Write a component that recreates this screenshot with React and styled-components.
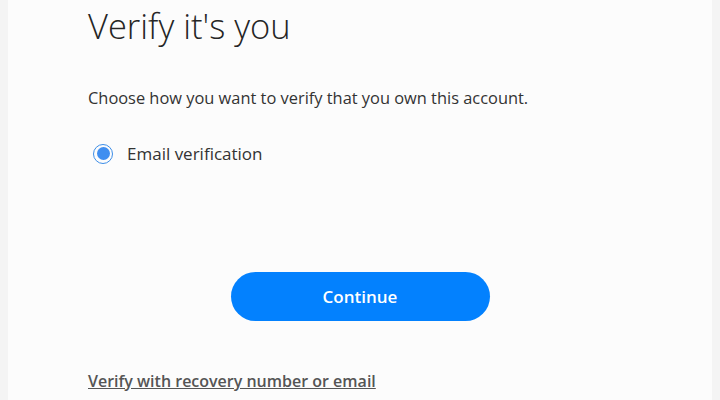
import styled, { createGlobalStyle } from "styled-components";

const GlobalStyle = createGlobalStyle`
    html, body {
        margin: 0;
        background: #f4f4f4;
        font-family: "Open Sans", "Noto Sans", sans-serif;
    }
`;

const Page = styled.div`
    padding: 0 8px;
    height: 400px;
    overflow: hidden;
`;

const Panel = styled.main`
    background: #fcfcfc;
    height: 100%;
    padding: 0 80px;
    display: flex;
    flex-direction: column;
`;

const Title = styled.h1`
    margin: 0;
    padding-top: 2px;
    font-size: 34.5px;
    font-weight: 300;
    line-height: 48px;
    color: #252525;
`;

const Description = styled.p`
    margin: 36px 0 0;
    font-size: 16.4px;
    line-height: 24px;
    color: #333;
`;

const Option = styled.label`
    margin-top: 32px;
    display: flex;
    align-items: center;
    gap: 14px;
    font-size: 17px;
    color: #333;
    padding-left: 5px;
`;

const Radio = styled.span`
    width: 18px;
    height: 18px;
    border-radius: 50%;
    border: 1.5px solid #3d8ee8;
    display: flex;
    align-items: center;
    justify-content: center;
    &::after {
        content: "";
        width: 13px;
        height: 13px;
        border-radius: 50%;
        background: #3f8ef0;
    }
`;

const Actions = styled.div`
    margin-top: 107px;
    display: flex;
    justify-content: center;
`;

const ContinueButton = styled.button`
    width: 259px;
    height: 49px;
    border: none;
    border-radius: 25px;
    background: #0381fe;
    color: #fff;
    font-family: inherit;
    font-size: 17px;
    font-weight: 600;
    cursor: pointer;
`;

const AltLink = styled.a`
    margin-top: 49px;
    align-self: flex-start;
    font-size: 16px;
    font-weight: 600;
    color: #555;
    text-decoration: underline;
    cursor: pointer;
`;

export default function App() {
    return (
        <>
            <GlobalStyle />
            <Page>
                <Panel>
                    <Title>Verify it's you</Title>
                    <Description>
                        Choose how you want to verify that you own this account.
                    </Description>
                    <Option>
                        <Radio />
                        Email verification
                    </Option>
                    <Actions>
                        <ContinueButton>Continue</ContinueButton>
                    </Actions>
                    <AltLink>Verify with recovery number or email</AltLink>
                </Panel>
            </Page>
        </>
    );
}
